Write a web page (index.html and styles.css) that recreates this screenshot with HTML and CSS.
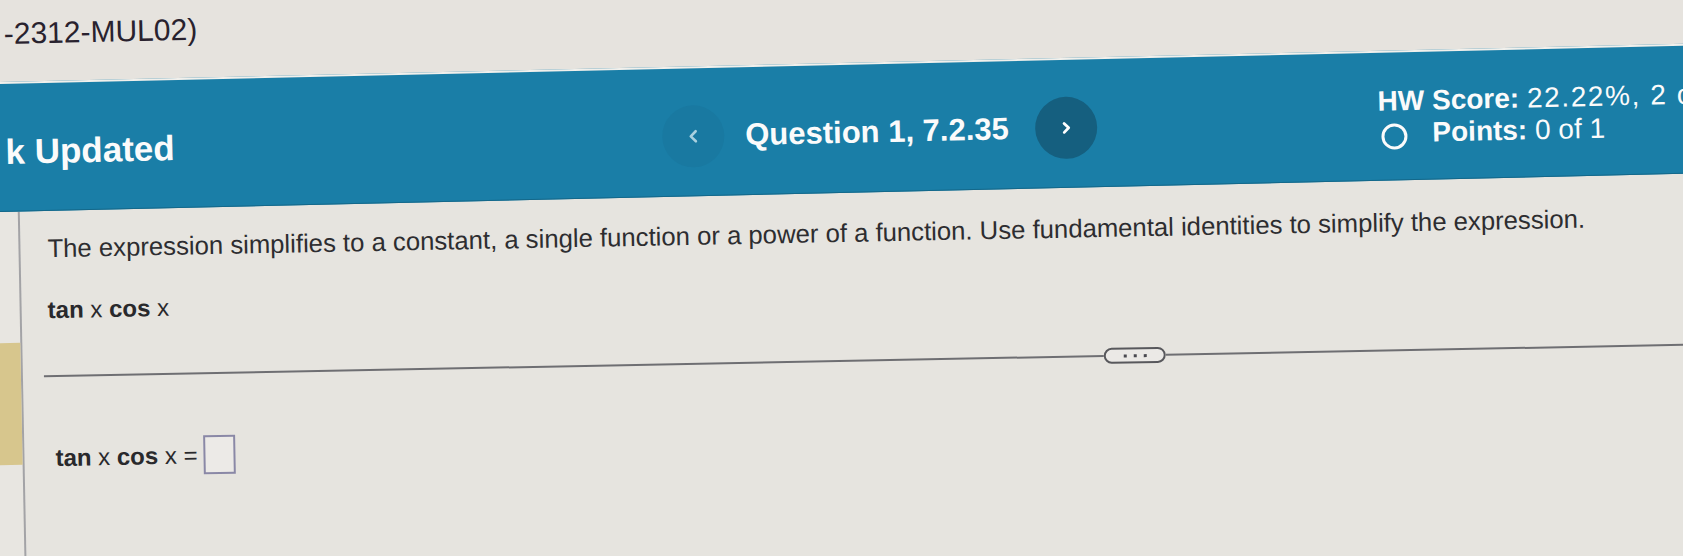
FILE: index.html
```html
<!DOCTYPE html>
<html lang="en">
<head>
<meta charset="utf-8">
<title>Question 1, 7.2.35</title>
<link rel="stylesheet" href="styles.css">
</head>
<body>
<div class="stage">
  <div class="topline"><span class="course">-2312-MUL02)</span></div>
  <header class="bar">
    <div class="title">k Updated</div>
    <nav class="qnav">
      <button class="circ prev" aria-label="Previous question">
        <svg width="12" height="16" viewBox="0 0 12 16"><polyline points="8.5,3 3.5,8 8.5,13" fill="none" stroke="currentColor" stroke-width="2.6" stroke-linecap="round" stroke-linejoin="round"/></svg>
      </button>
      <span class="qtitle">Question 1, 7.2.35</span>
      <button class="circ next" aria-label="Next question">
        <svg width="12" height="16" viewBox="0 0 12 16"><polyline points="4,3.5 8.5,8 4,12.5" fill="none" stroke="currentColor" stroke-width="2.8" stroke-linecap="round" stroke-linejoin="round"/></svg>
      </button>
    </nav>
    <div class="score">
      <div class="hw"><b>HW Score:</b> <span class="val">22.22%, 2 of 9 points</span></div>
      <div class="pts"><span class="ring"></span><span><b>Points:</b> 0 of 1</span></div>
    </div>
  </header>
  <main class="content">
    <aside class="rail"><span class="flag"></span></aside>
    <section class="question">
      <p class="prompt">The expression simplifies to a constant, a single function or a power of a function. Use fundamental identities to simplify the expression.</p>
      <div class="expr"><b>tan</b> x <b>cos</b> x</div>
      <div class="sep"><span class="pill"><i></i><i></i><i></i></span></div>
      <div class="answer"><span class="expr2"><b>tan</b> x <b>cos</b> x =</span><span class="box"></span></div>
    </section>
  </main>
</div>
</body>
</html>
```
FILE: styles.css
```css
html, body {
  margin: 0;
  padding: 0;
  background: #e4e1dc;
  overflow: hidden;
  width: 1683px;
  height: 556px;
}

.stage {
  width: 1780px;
  height: 660px;
  margin-left: -20px;
  transform: rotate(-1.3deg);
  transform-origin: 20px 0;
  background: #e5e2dd;
  font-family: "Liberation Sans", Arial, sans-serif;
  color: #2b2b2e;
}

.topline {
  height: 82px;
  box-sizing: border-box;
  padding: 17px 0 0 23px;
  background: #e6e3de;
}

.course {
  font-size: 30px;
  line-height: 34px;
  color: #29222e;
}

.bar {
  position: relative;
  z-index: 1;
  height: 130px;
  box-sizing: border-box;
  border-top: 2px solid #f1f0ec;
  border-bottom: 1px solid #14688a;
  background: #1a7ea7;
  color: #fbfbfb;
  display: grid;
  grid-template-columns: 657px 716px auto;
  align-items: start;
  padding-left: 22px;
  white-space: nowrap;
}

.title {
  margin-top: 50px;
  font-size: 35px;
  line-height: 35px;
  font-weight: 700;
}

.qnav {
  margin-top: 37px;
  display: flex;
  align-items: center;
  gap: 21px;
}

.circ {
  width: 62px;
  height: 62px;
  border-radius: 50%;
  border: 0;
  padding: 0;
  display: flex;
  align-items: center;
  justify-content: center;
  font: inherit;
  flex: none;
}

.circ.prev {
  background: #1979a1;
  color: #a9d0df;
}

.circ.next {
  background: #155f7f;
  color: #ffffff;
  margin-left: 5px;
}

.qtitle {
  font-size: 31px;
  line-height: 62px;
  font-weight: 700;
}

.score {
  margin-top: 33px;
  font-size: 28px;
  line-height: 32px;
}

.score b {
  font-weight: 700;
}

.hw .val {
  letter-spacing: 1.6px;
}

.pts {
  display: flex;
  align-items: flex-start;
}

.ring {
  width: 26px;
  height: 26px;
  box-sizing: border-box;
  border: 3px solid #fbfbfb;
  border-radius: 50%;
  margin: 6px 25px 0 3px;
  flex: none;
}

.content {
  display: flex;
  height: 470px;
  margin-top: -10px;
  padding-top: 10px;
  background: #e6e4df;
  transform: rotate(0.2deg);
  transform-origin: 0 0;
}

.rail {
  width: 33px;
  flex: none;
  border-right: 2px solid #a3a3a6;
  display: flex;
  flex-direction: column;
  background: #e8e6e1;
}

.flag {
  margin-top: 131px;
  height: 122px;
  background: #d7c68d;
}

.question {
  flex: 1;
  padding: 22px 0 0 27px;
}

.prompt {
  margin: 0;
  font-size: 25.7px;
  line-height: 30px;
  color: #2d2d30;
  white-space: nowrap;
}

.expr, .expr2 {
  font-size: 24px;
  line-height: 28px;
  color: #29292c;
}

.expr b, .expr2 b {
  font-weight: 700;
}

.expr {
  margin-top: 33px;
  margin-left: -1px;
}

.sep {
  margin: 44px 0 0 -6px;
  display: flex;
  align-items: center;
  height: 16px;
}

.sep::before {
  content: "";
  width: 1060px;
  height: 2px;
  background: #6e6e72;
  flex: none;
}

.sep::after {
  content: "";
  flex: 1;
  height: 2px;
  background: #6e6e72;
}

.pill {
  width: 62px;
  height: 16px;
  box-sizing: border-box;
  border: 2px solid #58585c;
  border-radius: 9px;
  background: #ebe9e6;
  display: flex;
  align-items: center;
  justify-content: center;
  gap: 7px;
  flex: none;
}

.pill i {
  width: 3px;
  height: 3px;
  background: #4a4a50;
}

.answer {
  margin-top: 54px;
  margin-left: 4px;
  display: flex;
  align-items: center;
  gap: 6px;
}

.box {
  width: 32px;
  height: 39px;
  box-sizing: border-box;
  border: 2px solid #8a88a6;
  background: #eceae7;
}
```
